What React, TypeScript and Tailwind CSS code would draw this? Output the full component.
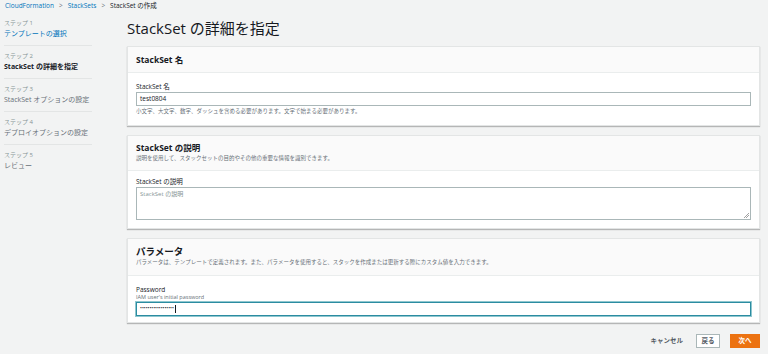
import React from "react";

const font = { fontFamily: '"Open Sans", "Noto Sans CJK JP", sans-serif' };

const steps = [
  { n: "ステップ 1", label: "テンプレートの選択", state: "done" },
  { n: "ステップ 2", label: "StackSet の詳細を指定", state: "current" },
  { n: "ステップ 3", label: "StackSet オプションの設定", state: "todo" },
  { n: "ステップ 4", label: "デプロイオプションの設定", state: "todo" },
  { n: "ステップ 5", label: "レビュー", state: "todo" },
];

function Card({
  title,
  desc,
  big,
  head = "pt-[6px] pb-[7px]",
  children,
}: {
  title: string;
  desc?: string;
  big?: boolean;
  head?: string;
  children: React.ReactNode;
}) {
  return (
    <div className="bg-white border border-[#e3e5e5] shadow-[0_1px_1px_rgba(0,0,0,0.25)]">
      <div className={`bg-[#fafafa] border-b border-[#eaeded] px-[8px] ${desc ? head : "h-[26px] flex items-center"}`}>
        <div className={`font-bold text-[#16191f] ${big ? "text-[9.5px] leading-[12px]" : "text-[8.5px] leading-[12px]"}`}>{title}</div>
        {desc && <div className="text-[5.5px] leading-[9px] text-[#687078]">{desc}</div>}
      </div>
      <div className="px-[8px]">{children}</div>
    </div>
  );
}

export default function App() {
  return (
    <div className="w-[768px] h-[354px] bg-[#f2f3f3] overflow-hidden relative" style={font}>
      <div className="h-[12px] flex items-center px-[5px] text-[6.5px] gap-[5px] text-[#545b64]">
        <span className="text-[#0073bb]">CloudFormation</span>
        <span className="text-[#687078]">&gt;</span>
        <span className="text-[#0073bb]">StackSets</span>
        <span className="text-[#687078]">&gt;</span>
        <span className="text-[#16191f]">StackSet の作成</span>
      </div>
      <div className="flex">
        <div className="w-[127px] shrink-0 pl-[4px] pt-[4px]">
          {steps.map((s, i) => (
            <div key={i} className={`w-[88px] pb-[6px] pt-[2px] ${i < steps.length - 1 ? "border-b border-[#e3e5e5] mb-[3px]" : ""}`}>
              <div className="text-[6px] leading-[10px] text-[#879596]">{s.n}</div>
              <div
                className={`text-[7px] leading-[11px] ${
                  s.state === "done" ? "text-[#0073bb]" : s.state === "current" ? "font-bold text-[#16191f]" : "text-[#687078]"
                }`}
              >
                {s.label}
              </div>
            </div>
          ))}
        </div>
        <div className="flex-1 pr-[8px]">
          <div className="text-[15px] leading-[20px] text-[#16191f] mt-[6px] mb-[8px]">StackSet の詳細を指定</div>
          <div className="flex flex-col gap-[9px]">
            <Card title="StackSet 名">
              <div className="pt-[9px] pb-[9px]">
                <div className="text-[6.5px] leading-[10px] text-[#16191f]">StackSet 名</div>
                <div className="h-[14px] border border-[#aab7b8] flex items-center px-[3px] text-[6.5px] text-[#16191f]">test0804</div>
                <div className="text-[5.5px] leading-[9px] text-[#687078] mt-[1px]">
                  小文字、大文字、数字、ダッシュを含める必要があります。文字で始まる必要があります。
                </div>
              </div>
            </Card>
            <Card title="StackSet の説明" desc="説明を使用して、スタックセットの目的やその他の重要な情報を識別できます。">
              <div className="pt-[6px] pb-[8px]">
                <div className="text-[6.5px] leading-[10px] text-[#16191f]">StackSet の説明</div>
                <div className="h-[33px] border border-[#aab7b8] px-[3px] pt-[2px] text-[6px] text-[#879596] relative">
                  StackSet の説明
                  <svg className="absolute right-[1px] bottom-[1px]" width="5" height="5" viewBox="0 0 5 5">
                    <path d="M0 5 L5 0 M2 5 L5 2" stroke="#8a8a8a" strokeWidth="0.8" />
                  </svg>
                </div>
              </div>
            </Card>
            <Card
              title="パラメータ"
              big
              head="pt-[7px] pb-[8px]"
              desc="パラメータは、テンプレートで定義されます。また、パラメータを使用すると、スタックを作成または更新する際にカスタム値を入力できます。"
            >
              <div className="pt-[9px] pb-[6px]">
                <div className="text-[6.5px] leading-[9px] text-[#16191f]">Password</div>
                <div className="text-[5.5px] leading-[7px] text-[#687078]">IAM user's initial password</div>
                <div className="h-[14px] border border-[#2b8ca1] shadow-[0_0_0_1px_#8fc7cf] flex items-center px-[3px] text-[5px] text-[#16191f] mt-[1px]">
                  ••••••••••••••••••
                  <span className="inline-block w-[1px] h-[8px] bg-[#16191f] ml-[1px]" />
                </div>
              </div>
            </Card>
          </div>
          <div className="flex justify-end items-center mt-[11px] gap-[10px]">
            <span className="text-[6.5px] text-[#545b64] font-bold mr-[3px]">キャンセル</span>
            <div className="w-[24px] h-[14px] bg-white border border-[#aab7b8] flex items-center justify-center text-[6.5px] font-bold text-[#545b64]">戻る</div>
            <div className="w-[30px] h-[14px] bg-[#ec7211] border border-[#ec7211] flex items-center justify-center text-[6.5px] font-bold text-white">次へ</div>
          </div>
        </div>
      </div>
    </div>
  );
}
